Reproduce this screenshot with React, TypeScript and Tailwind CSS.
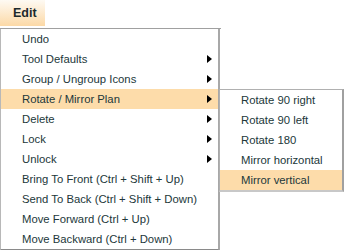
import React from "react";

const Arrow = () => (
  <svg width="5" height="8" viewBox="0 0 5 8" className="block">
    <path d="M0 0 L5 4 L0 8 Z" fill="#000" />
  </svg>
);

const items: { label: string; sub?: boolean; active?: boolean }[] = [
  { label: "Undo" },
  { label: "Tool Defaults", sub: true },
  { label: "Group / Ungroup Icons", sub: true },
  { label: "Rotate / Mirror Plan", sub: true, active: true },
  { label: "Delete", sub: true },
  { label: "Lock", sub: true },
  { label: "Unlock", sub: true },
  { label: "Bring To Front (Ctrl + Shift + Up)" },
  { label: "Send To Back (Ctrl + Shift + Down)" },
  { label: "Move Forward (Ctrl + Up)" },
  { label: "Move Backward (Ctrl + Down)" },
];

const subItems = [
  { label: "Rotate 90 right" },
  { label: "Rotate 90 left" },
  { label: "Rotate 180" },
  { label: "Mirror horizontal" },
  { label: "Mirror vertical", active: true },
];

export default function App() {
  return (
    <div
      className="relative w-[344px] h-[250px] bg-white overflow-hidden text-[11.3px] text-[#22373a]"
      style={{ fontFamily: '"Liberation Sans", Arial, sans-serif' }}
    >
      <div className="w-[45px] h-[26px] flex items-center pl-[13px] font-bold text-[12.5px] text-[#1c2a2c] bg-gradient-to-b from-[#fefaf3] to-[#fcd9a6]">
        Edit
      </div>
      <div className="mt-[2px] w-[221px] border-t border-[#a0a0a0] flex">
        <div className="w-[220px] border-l border-b-2 border-r-2 border-l-[#b8b8b8] border-b-[#8a8a8a] border-r-[#a8a8a8] bg-white">
          {items.map((it) => (
            <div
              key={it.label}
              className={`h-[20px] flex items-center pl-[21px] pr-[6px] ${it.active ? "bg-[#fddcaa]" : ""}`}
            >
              <span className="flex-1">{it.label}</span>
              {it.sub && <Arrow />}
            </div>
          ))}
        </div>
      </div>
      <div className="absolute left-[219px] top-[89px] w-[125px] bg-white border border-[#b0b0b0] border-r-2 border-r-[#a0a0a0] border-b-2 border-b-[#c8c8c8]">
        {subItems.map((it) => (
          <div
            key={it.label}
            className={`h-[20px] flex items-center pl-[21px] ${it.active ? "bg-[#fddcaa]" : ""}`}
          >
            {it.label}
          </div>
        ))}
      </div>
    </div>
  );
}
